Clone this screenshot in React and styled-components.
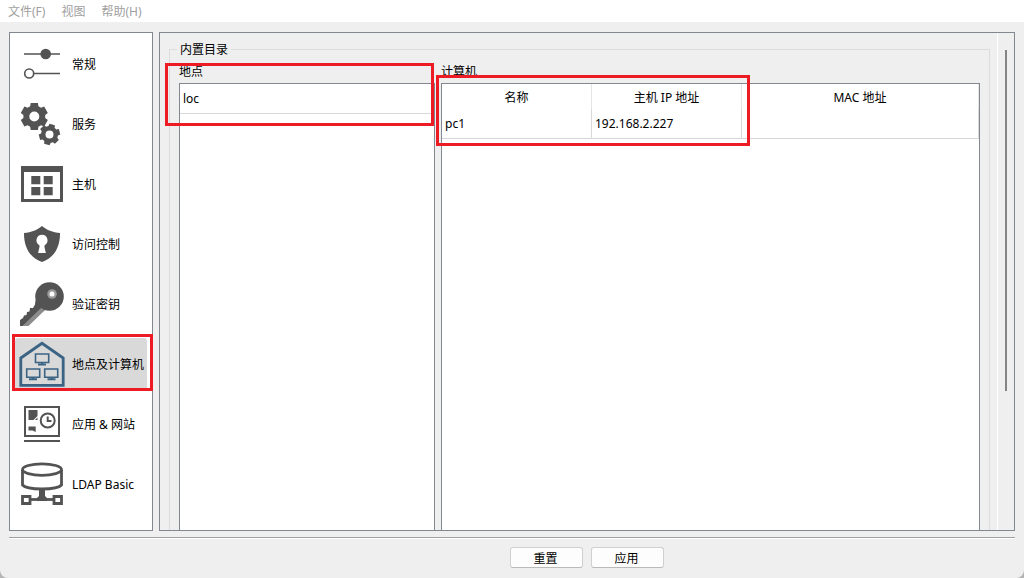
import React from 'react';
import styled, { createGlobalStyle } from 'styled-components';

const INK = '#535353';
const STEEL = '#3b6384';

const GlobalStyle = createGlobalStyle`
  * { box-sizing: border-box; }
  body { margin: 0; background: #b4b4b4; }
  body, button { font: 12px/16px "Noto Sans", "Noto Sans CJK SC", sans-serif; color: #000; }
  button { margin: 0; padding: 0; border: 0; background: none; }
`;

const Window = styled.div`
  min-height: 100vh;
  display: flex;
  flex-direction: column;
  background: #efefef;
  border-radius: 0 0 8px 8px;
  overflow: hidden;
`;

const MenuBar = styled.nav`
  display: flex;
  gap: 16px;
  height: 22px;
  padding: 0 8px;
  background: #fff;
`;

const MenuButton = styled.button`
  padding-top: 1px;
  color: #a0a0a0;
`;

const Main = styled.main`
  flex: 1;
  display: flex;
  gap: 6px;
  padding: 10px 9px 0;
`;

const Sidebar = styled.nav`
  flex: 0 0 144px;
  display: flex;
  flex-direction: column;
  gap: 8px;
  padding: 5px;
  background: #fff;
  border: 1px solid #828790;
`;

const NavItem = styled.button`
  position: relative;
  display: flex;
  align-items: center;
  gap: 6px;
  height: 52px;
  padding-left: 3px;
  border-radius: 3px;
  white-space: nowrap;
  background: ${(p) => (p.$active ? '#d9d9d9' : 'transparent')};

  svg { flex: none; }
`;

const NavLabel = styled.span`
  padding-top: 2px;
`;

const Marker = styled.span`
  position: absolute;
  border: 3px solid #ed1c24;
  pointer-events: none;
  z-index: 1;
`;

const NavMarker = styled(Marker)`
  inset: -4px -6px -1px -3px;
`;

const LocationMarker = styled(Marker)`
  inset: 1px 1px auto -14px;
  height: 63px;
`;

const ComputerMarker = styled(Marker)`
  inset: 13px auto auto -5px;
  width: 314px;
  height: 71px;
`;

const Panel = styled.section`
  flex: 1;
  min-width: 0;
  display: flex;
  border: 1px solid #828790;
`;

const PanelBody = styled.div`
  flex: 1;
  min-width: 0;
  display: flex;
  padding: 7px 7px 0 9px;
`;

const Group = styled.fieldset`
  flex: 1;
  min-width: 0;
  display: flex;
  gap: 6px;
  margin: 0;
  padding: 4px 9px 0;
  border: 1px solid #dcdcdc;
  border-bottom: 0;
`;

const GroupTitle = styled.legend`
  padding: 2px 3px 0;
  margin-left: -2px;
`;

const Column = styled.div`
  position: relative;
  display: flex;
  flex-direction: column;
  min-width: 0;
  flex: ${(p) => p.$flex};
`;

const ColumnTitle = styled.h2`
  margin: 0 0 1px;
  font: inherit;
  line-height: 20px;
`;

const ListBox = styled.div`
  flex: 1;
  background: #fff;
  border: 1px solid #828790;
  border-bottom: 0;
`;

const List = styled.ul`
  margin: 0;
  padding: 0;
  list-style: none;
`;

const ListItem = styled.li`
  height: 30px;
  margin-right: 2px;
  padding-left: 3px;
  line-height: 30px;
  border-bottom: 1px solid #d8d8d8;
`;

const Table = styled.table`
  width: 100%;
  table-layout: fixed;
  border-collapse: separate;
  border-spacing: 0;
`;

const HeadCell = styled.th`
  width: ${(p) => p.$width};
  height: 25px;
  padding: 2px 0 0;
  font-weight: normal;
  border-right: 1px solid #e5e5e5;
`;

const Cell = styled.td`
  height: 30px;
  padding: 0 3px;
  border: solid #d8d8d8;
  border-width: 0 1px 1px 0;
`;

const ScrollTrack = styled.div`
  flex: 0 0 17px;
  padding: 17px 7px 0;
  border-left: 1px solid #fff;
`;

const ScrollThumb = styled.div`
  width: 2px;
  height: 71%;
  background: #858585;
`;

const Footer = styled.footer`
  padding: 6px 9px 10px;
`;

const Rule = styled.hr`
  margin: 0 0 8px;
  border: solid;
  border-width: 1px 0;
  border-color: #a0a0a0 transparent #fff;
`;

const Actions = styled.div`
  display: flex;
  justify-content: center;
  gap: 8px;
  padding-left: 150px;
`;

const ActionButton = styled.button`
  width: 73px;
  height: 21px;
  padding: 2px 2px 0 0;
  background: #fdfdfd;
  border: 1px solid #d0d0d0;
  border-bottom-color: #bababa;
  border-radius: 3px;
`;

const Icon = ({ children }) => (
  <svg width="48" height="48" viewBox="0 0 48 48" aria-hidden="true">{children}</svg>
);

function gearPath(cx, cy, outer, inner, hole, turn) {
  const at = (r, deg) => {
    const a = ((deg + turn) * Math.PI) / 180;
    return `${(cx + r * Math.cos(a)).toFixed(2)} ${(cy + r * Math.sin(a)).toFixed(2)}`;
  };
  const points = [];
  for (let i = 0; i < 6; i += 1) {
    const d = i * 60;
    points.push(at(inner, d - 22), at(outer, d - 15), at(outer, d + 15), at(inner, d + 22));
  }
  return `M${points.join('L')}Z M${cx - hole} ${cy}a${hole} ${hole} 0 1 0 ${hole * 2} 0a${hole} ${hole} 0 1 0 ${-hole * 2} 0Z`;
}

const GeneralIcon = () => (
  <Icon>
    <path d="M6 14H42M16 33.5H42" stroke={INK} strokeWidth="1.7" />
    <circle cx="27.7" cy="14" r="5.3" fill={INK} />
    <circle cx="11.2" cy="33.5" r="4.5" fill="#fff" stroke={INK} strokeWidth="1.6" />
  </Icon>
);

const ServiceIcon = () => (
  <Icon>
    <path fillRule="evenodd" fill={INK} d={gearPath(16.3, 16.5, 14, 11, 5, 30)} />
    <path fillRule="evenodd" fill={INK} d={gearPath(31.5, 34.5, 10.8, 8.5, 4, 45)} />
  </Icon>
);

const HostIcon = () => (
  <Icon>
    <path fillRule="evenodd" fill={INK} d="M3 6H45V42H3ZM6 12V39H42V12Z" />
    <path fill={INK} d="M13.3 16h9v8.3h-9zM25.7 16h9v8.3h-9zM13.3 27h9v8.3h-9zM25.7 27h9v8.3h-9z" />
  </Icon>
);

const AccessIcon = () => (
  <Icon>
    <path fill={INK} d="M24 6C28 9.6 35 12.6 42 13C42.2 27 36 38 24 42C12 38 5.8 27 6 13C13 12.6 20 9.6 24 6Z" />
    <path fill="#fff" d="M24 14.8a5.8 5.6 0 0 0-3 10.2c1 .8.6 2-.9 8h7.8c-1.5-6-1.9-7.2-.9-8a5.8 5.6 0 0 0-3-10.2Z" />
  </Icon>
);

const KeyIcon = () => (
  <Icon>
    <path fill={INK} d="M17.5 20L17 24.5L15 28H12L11.5 31.5L9 32L8.5 35L6 35.5L5 38L2 40V46H5L27 30Z" />
    <path fill="#8c8c8c" d="M4.5 46H10.5L27 30L24 27Z" />
    <circle cx="31.5" cy="16.5" r="14.3" fill={INK} />
    <circle cx="34" cy="14" r="4.8" fill="#9a9a9a" />
    <circle cx="34" cy="14" r="2.5" fill="#fff" />
  </Icon>
);

const LocationsIcon = () => (
  <Icon>
    <path fill="none" stroke={STEEL} strokeWidth="2.8" d="M2.8 18L24 3.3L45.2 18V45.3H2.8Z" />
    <g fill="none" stroke={STEEL} strokeWidth="1.6">
      <path d="M17.5 14h13.2v8.5h-13.2zM8.7 29h13v8.2h-13zM26.7 29h13v8.2h-13z" />
      <path d="M20 24.5h8M11 39.3h8M29.5 39.3h8M24 22v2M15 37v2M33.5 37v2" strokeWidth="2" />
    </g>
  </Icon>
);

const AppsIcon = () => (
  <Icon>
    <path fill="none" stroke={INK} strokeWidth="2" d="M7 7H41V36H7Z" />
    <path fill={INK} d="M6 40H42V42H6ZM10.5 10H19.5V16L15.5 20H10.5ZM19.5 17.5V20H17ZM10.5 26.5H17.7V32L14.5 30.5H10.5Z" />
    <circle cx="29.7" cy="20.5" r="7" fill="none" stroke={INK} strokeWidth="2" />
    <path d="M29.7 16.5V21H33.5" fill="none" stroke={INK} strokeWidth="2" />
  </Icon>
);

const LdapIcon = () => (
  <Icon>
    <g fill="none" stroke={INK} strokeWidth="2.8">
      <ellipse cx="24" cy="9.6" rx="19.5" ry="5.8" />
      <path d="M4.5 10V25C9 30.3 39 30.3 43.5 25V10" />
      <path d="M12 39.5H36" />
      <path d="M4.5 36.5H12V43.5H4.5ZM36 36.5H43.5V43.5H36Z" />
    </g>
    <path fill={INK} d="M21 29H27V36L29 38V41H19V38L21 36Z" />
  </Icon>
);

const sections = [
  { label: '常规', Glyph: GeneralIcon },
  { label: '服务', Glyph: ServiceIcon },
  { label: '主机', Glyph: HostIcon },
  { label: '访问控制', Glyph: AccessIcon },
  { label: '验证密钥', Glyph: KeyIcon },
  { label: '地点及计算机', Glyph: LocationsIcon, active: true },
  { label: '应用 & 网站', Glyph: AppsIcon },
  { label: 'LDAP Basic', Glyph: LdapIcon },
];

const locations = ['loc'];
const computers = [{ name: 'pc1', ip: '192.168.2.227', mac: '' }];

export default function App() {
  return (
    <Window>
      <GlobalStyle />
      <MenuBar>
        {['文件(F)', '视图', '帮助(H)'].map((m) => (
          <MenuButton key={m} type="button">{m}</MenuButton>
        ))}
      </MenuBar>
      <Main>
        <Sidebar>
          {sections.map(({ label, Glyph, active }) => (
            <NavItem key={label} type="button" $active={active}>
              <Glyph />
              <NavLabel>{label}</NavLabel>
              {active && <NavMarker />}
            </NavItem>
          ))}
        </Sidebar>
        <Panel>
          <PanelBody>
            <Group>
              <GroupTitle>内置目录</GroupTitle>
              <Column $flex="0 0 256px">
                <ColumnTitle>地点</ColumnTitle>
                <ListBox>
                  <List>
                    {locations.map((l) => <ListItem key={l}>{l}</ListItem>)}
                  </List>
                </ListBox>
                <LocationMarker />
              </Column>
              <Column $flex="1">
                <ColumnTitle>计算机</ColumnTitle>
                <ListBox>
                  <Table>
                    <thead>
                      <tr>
                        <HeadCell $width="150px">名称</HeadCell>
                        <HeadCell $width="150px">主机 IP 地址</HeadCell>
                        <HeadCell>MAC 地址</HeadCell>
                      </tr>
                    </thead>
                    <tbody>
                      {computers.map((c) => (
                        <tr key={c.name}>
                          <Cell>{c.name}</Cell>
                          <Cell>{c.ip}</Cell>
                          <Cell>{c.mac}</Cell>
                        </tr>
                      ))}
                    </tbody>
                  </Table>
                </ListBox>
                <ComputerMarker />
              </Column>
            </Group>
          </PanelBody>
          <ScrollTrack>
            <ScrollThumb />
          </ScrollTrack>
        </Panel>
      </Main>
      <Footer>
        <Rule />
        <Actions>
          <ActionButton type="button">重置</ActionButton>
          <ActionButton type="button">应用</ActionButton>
        </Actions>
      </Footer>
    </Window>
  );
}
